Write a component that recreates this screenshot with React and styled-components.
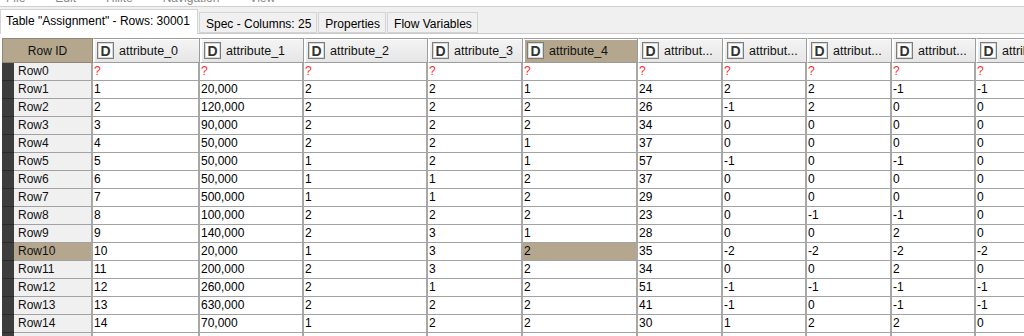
import React from 'react';
import styled, { createGlobalStyle } from 'styled-components';

const GlobalStyle = createGlobalStyle`
  body {
    margin: 0;
    background: #ffffff;
    font-family: "Liberation Sans", Arial, sans-serif;
    font-size: 12px;
    color: #000;
  }
`;

const COLS = '14px 79px 107px 104px 124px 95px 115px 85px 84px 85px 84px 84px';

const columns = [
  { name: 'attribute_0' },
  { name: 'attribute_1' },
  { name: 'attribute_2' },
  { name: 'attribute_3' },
  { name: 'attribute_4', selected: true },
  { name: 'attribut...' },
  { name: 'attribut...' },
  { name: 'attribut...' },
  { name: 'attribut...' },
  { name: 'attribut...' },
];

const rows = [
  ['1', '20,000', '2', '2', '1', '24', '2', '2', '-1', '-1'],
  ['2', '120,000', '2', '2', '2', '26', '-1', '2', '0', '0'],
  ['3', '90,000', '2', '2', '2', '34', '0', '0', '0', '0'],
  ['4', '50,000', '2', '2', '1', '37', '0', '0', '0', '0'],
  ['5', '50,000', '1', '2', '1', '57', '-1', '0', '-1', '0'],
  ['6', '50,000', '1', '1', '2', '37', '0', '0', '0', '0'],
  ['7', '500,000', '1', '1', '2', '29', '0', '0', '0', '0'],
  ['8', '100,000', '2', '2', '2', '23', '0', '-1', '-1', '0'],
  ['9', '140,000', '2', '3', '1', '28', '0', '0', '2', '0'],
  ['10', '20,000', '1', '3', '2', '35', '-2', '-2', '-2', '-2'],
  ['11', '200,000', '2', '3', '2', '34', '0', '0', '2', '0'],
  ['12', '260,000', '2', '1', '2', '51', '-1', '-1', '-1', '-1'],
  ['13', '630,000', '2', '2', '2', '41', '-1', '0', '-1', '-1'],
  ['14', '70,000', '1', '2', '2', '30', '1', '2', '2', '0'],
];

// menu bar is scrolled mostly out of view in the screenshot
const MenuStrip = styled.div`
  height: 6px;
  overflow: hidden;
  display: flex;
  gap: 30px;
  padding-left: 6px;
  color: #8a8a8a;
  border-bottom: 1px solid #cfcfcf;
  span {
    margin-top: -9px;
    line-height: 14px;
  }
`;

const TabBar = styled.div`
  height: 27px;
  background: #f0f0f0;
  display: flex;
  align-items: flex-end;
  border-bottom: 1px solid #c9c9c9;
  box-sizing: border-box;
`;

const Tab = styled.div`
  height: ${p => (p.$active ? '25px' : '21px')};
  margin-bottom: ${p => (p.$active ? '-1px' : '0')};
  background: ${p => (p.$active ? '#ffffff' : '#f0f0f0')};
  border: 1px solid #d4d4d4;
  border-bottom: ${p => (p.$active ? 'none' : '1px solid #d4d4d4')};
  box-sizing: border-box;
  padding: ${p => (p.$active ? '4px 7px 0 5px' : '4px 5px 0 6px')};
  margin-right: 1px;
  white-space: nowrap;
  color: #000;
`;

const Gap = styled.div`
  height: 4px;
`;

const Grid = styled.div`
  overflow: hidden;
  width: 1024px;
`;

const HeadRow = styled.div`
  display: grid;
  grid-template-columns: ${COLS};
  height: 25px;
  width: 1060px;
`;

const RowIdHead = styled.div`
  grid-column: 1 / span 2;
  margin-left: 2px;
  background: #b4a78d;
  border: 1px solid #8f8678;
  box-sizing: border-box;
  display: flex;
  align-items: center;
  justify-content: center;
  color: #111;
`;

const ColHead = styled.div`
  background: ${p => (p.$selected ? '#b4a78d' : 'linear-gradient(#f4f4f4, #e6e6e6)')};
  border: 1px solid #9c9c9c;
  border-left: 1px solid #ffffff;
  box-shadow: inset 1px 1px 0 #ffffff;
  box-sizing: border-box;
  display: flex;
  align-items: center;
  gap: 5px;
  padding-left: 3px;
  white-space: nowrap;
  overflow: hidden;
  color: #111;
  font-size: 12.5px;
`;

const TypeBadge = styled.span`
  width: 17px;
  height: 17px;
  flex: none;
  box-sizing: border-box;
  background: #ffffff;
  border: 1px solid #7c7c7c;
  box-shadow: inset 0 0 0 1px #d8d8d8;
  display: flex;
  align-items: center;
  justify-content: center;
  font-weight: bold;
  font-size: 14px;
  color: #333;
`;

const Row = styled.div`
  display: grid;
  grid-template-columns: ${COLS};
  height: 18px;
  width: 1060px;
`;

const Marker = styled.div`
  margin-left: 2px;
  background: #3d3d3d;
  border-bottom: 1px solid #2a2a2a;
`;

const RowId = styled.div`
  background: ${p => (p.$selected ? '#b4a78d' : '#f0f0f0')};
  border-bottom: 1px solid #a2a2a2;
  border-right: 2px solid #a8a8a8;
  box-sizing: border-box;
  padding-left: 4px;
  line-height: 17px;
  color: #111;
`;

const Cell = styled.div`
  background: ${p => (p.$selected ? '#b4a78d' : '#ffffff')};
  border-bottom: 1px solid #a2a2a2;
  border-right: 2px solid #a8a8a8;
  box-sizing: border-box;
  padding-left: 1px;
  line-height: 17px;
  white-space: nowrap;
  overflow: hidden;
  color: ${p => (p.$missing ? '#ff2a2a' : '#000')};
`;

function App() {
  return (
    <>
      <GlobalStyle />
      <MenuStrip>
        <span>File</span>
        <span>Edit</span>
        <span>Hilite</span>
        <span>Navigation</span>
        <span>View</span>
      </MenuStrip>
      <TabBar>
        <Tab $active>Table "Assignment" - Rows: 30001</Tab>
        <Tab>Spec - Columns: 25</Tab>
        <Tab>Properties</Tab>
        <Tab>Flow Variables</Tab>
      </TabBar>
      <Gap />
      <Grid>
        <HeadRow>
          <RowIdHead>Row ID</RowIdHead>
          {columns.map((c, i) => (
            <ColHead key={i} $selected={c.selected}>
              <TypeBadge>D</TypeBadge>
              {c.name}
            </ColHead>
          ))}
        </HeadRow>
        <Row>
          <Marker />
          <RowId>Row0</RowId>
          {columns.map((c, i) => (
            <Cell key={i} $missing>?</Cell>
          ))}
        </Row>
        {rows.map((r, ri) => {
          const sel = ri + 1 === 10;
          return (
            <Row key={ri}>
              <Marker />
              <RowId $selected={sel}>Row{ri + 1}</RowId>
              {r.map((v, ci) => (
                <Cell key={ci} $selected={sel && ci === 4}>{v}</Cell>
              ))}
            </Row>
          );
        })}
        <Row>
          <Marker />
          <RowId />
          {columns.map((c, i) => (
            <Cell key={i} />
          ))}
        </Row>
      </Grid>
    </>
  );
}

export default App;
